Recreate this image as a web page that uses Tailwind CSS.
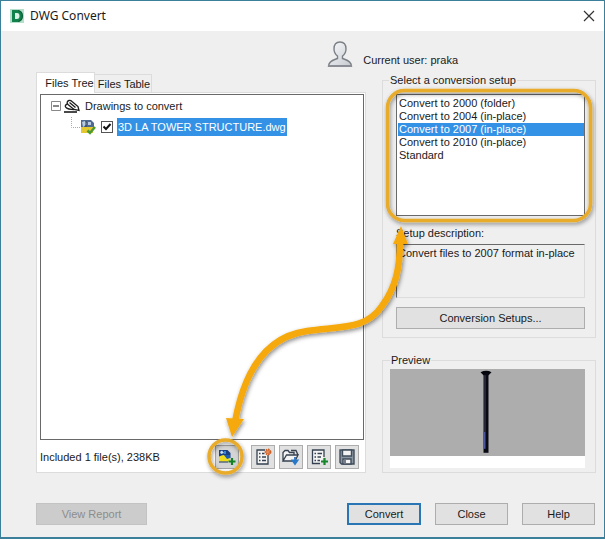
<!DOCTYPE html>
<html lang="en">
<head>
  <meta charset="UTF-8" />
  <meta name="viewport" content="width=device-width, initial-scale=1.0" />
  <title>DWG Convert</title>
  <script src="https://cdn.jsdelivr.net/npm/@tailwindcss/browser@4"></script>
</head>
<body class="font-['Liberation_Sans',Arial,sans-serif] text-[11px] leading-4 text-[#1a1a1a]">
  <div class="relative min-h-screen flex flex-col bg-[#efefef] border border-[#3c7f9b] border-b-2">
    <!-- Title bar -->
    <header class="h-[30px] flex items-center gap-1 bg-white pl-2 pr-2">
      <svg class="w-4 h-4" viewBox="0 0 16 16">
        <path d="M1 1h14v14H1z" fill="#b5dfca" />
        <path d="M4.500 3.500h3.500q4 0 4 4.500t-4 4.500H4.500z" fill="#d9f1e4" stroke="#12804b" stroke-width="3" />
        <path d="M9 2.500q4.500 1 4.500 5.500T9 13.500" fill="none" stroke="#0d6239" stroke-width="1.200" />
      </svg>
      <h1 class="grow font-['Noto_Sans','Open_Sans',sans-serif] text-xs pl-px">DWG Convert</h1>
      <button aria-label="Close window" class="w-4 h-4">
        <svg class="w-4 h-4" viewBox="0 0 16 16" fill="none" stroke="#333" stroke-width="1.200"><path d="M4 3l10 10M14 3L4 13" /></svg>
      </button>
    </header>

    <main class="grow flex flex-col pl-[35px] pr-2">
      <!-- Current user -->
      <div class="h-[41px] flex items-end justify-end gap-[10px] pr-[138px] pb-1">
        <svg class="w-[26px] h-7" viewBox="0 0 26 28">
          <defs>
            <linearGradient id="bust" x1="0" y1="0" x2="1" y2="1"><stop offset="0" stop-color="#fafbfc" /><stop offset="1" stop-color="#c6cad0" /></linearGradient>
          </defs>
          <path d="M13 2c-4 0-6 3-6 7 0 3 1.500 5.500 3.500 7v2.500C7 20 2 20.500 1.500 26h23C24 20.500 19 20 15.500 18.500V16C17.500 14.500 19 12 19 9c0-4-2-7-6-7z" fill="url(#bust)" stroke="#7b8087" stroke-width="1.400" />
          <path d="M1 26h24" stroke="#8a8e94" stroke-width="2" />
        </svg>
        <span>Current user: praka</span>
      </div>

      <div class="grow flex gap-4">
        <!-- Files -->
        <section class="grow flex flex-col">
          <div role="tablist" class="flex items-end h-5">
            <button role="tab" aria-selected="true" class="relative w-[59px] h-[21px] -mb-px pl-2 bg-white border border-b-0 border-[#dcdcdc]">Files Tree</button>
            <button role="tab" class="w-[57px] h-[18px] pl-0.5 bg-[#efefef] border border-l-0 border-b-0 border-[#dcdcdc]">Files Table</button>
          </div>
          <div class="grow flex flex-col bg-white border border-[#dcdcdc] pl-[3px] pr-px pt-px">
            <ul class="grow border border-[#696969] pl-[10px]">
              <li>
                <div class="flex items-center h-[22px]">
                  <svg class="w-[10px] h-[10px]" viewBox="0 0 10 10" fill="none"><path d="M.5.5h9v9h-9z" stroke="#888" /><path d="M2 5h6" stroke="#111" /></svg>
                  <svg class="w-[18px] h-4 ml-[2px]" viewBox="0 0 18 16" fill="none" stroke="#1c1c1c" stroke-width="1.300">
                    <path d="M6 2.500C4 3 3.500 5 5 6.500l6 5 5 1-1-4-6-5C8 2.500 7 2.300 6 2.500z" fill="#fff" />
                    <path d="M6.500 4.500l6 5M4.500 6C2.500 6.500 1.500 8 3 9.500c2 2 5 2 8 2" />
                    <path d="M1 14h13" stroke-width="1.600" />
                  </svg>
                  <span class="pl-1">Drawings to convert</span>
                </div>
                <ul>
                  <li class="flex items-center h-5 pl-5">
                    <svg class="w-[9px] h-5" viewBox="0 0 9 20" fill="none" stroke="#aaa" stroke-dasharray="1 1"><path d="M.5 0v10.500H9" /></svg>
                    <svg class="w-4 h-4" viewBox="0 0 16 16">
                      <path d="M1 1h10l3 3v5H1z" fill="#4e6a90" />
                      <path d="M2 3l3-1 2 3-4 3zM8 3h3v3H8z" fill="#b8cbe0" />
                      <path d="M1 8h12v6H1z" fill="#e3c92f" />
                      <path d="M6 2v6" stroke="#2f4059" fill="none" />
                      <path d="M7.500 11.500l2.500 2.500 5-6" fill="none" stroke="#4b9a35" stroke-width="2.500" />
                    </svg>
                    <input id="drawing" type="checkbox" checked class="peer appearance-none w-3 h-3 ml-[5px] border border-[#555] bg-white" />
                    <svg class="w-3 h-3 -ml-3 pointer-events-none" viewBox="0 0 12 12" fill="none" stroke="#111" stroke-width="2"><path d="M2.500 5.500L5 8l4.500-5" /></svg>
                    <label for="drawing" class="ml-1 px-px h-[18px] leading-[18px] bg-[#3392e6] text-white">3D LA TOWER STRUCTURE.dwg</label>
                  </li>
                </ul>
              </li>
            </ul>
            <div class="flex items-center h-8 pt-px pr-[5px]">
              <span class="grow">Included 1 file(s), 238KB</span>
              <div class="flex gap-1">
                <button aria-label="Add drawing" class="w-6 h-6 mr-2 flex items-center justify-center bg-[#d4d4d4] border border-[#a5a5a5]">
                  <svg class="w-5 h-5" viewBox="0 0 20 20">
                    <path d="M2 3h8.500l3 3v5H2z" fill="#173f82" />
                    <path d="M3 5l2-1.500L7 6 4 7z" fill="#c9def5" />
                    <path d="M7 4h2v3H7z" fill="#3c82d6" />
                    <path d="M2 9.500l4-1.500 7 1v5.500H2z" fill="#f0dc1a" />
                    <path d="M7 8h6v3l-3 1z" fill="#1c5cb4" />
                    <path d="M2 15h9" stroke="#16335f" />
                    <path d="M15 11v7M11.500 14.500h7" stroke="#128126" stroke-width="2.200" />
                  </svg>
                </button>
                <button aria-label="New list" class="w-6 h-6 flex items-center justify-center bg-[#e1e1e1] border border-[#adadad]">
                  <svg class="w-5 h-5" viewBox="0 0 20 20" fill="none" stroke="#354150" stroke-width="1.300">
                    <path d="M12 3H4v14h11V8" fill="#f4f4f4" /><path d="M6 6.500h1.500m1.500 0h2.500M6 10h1.500m1.500 0h4M6 13.500h1.500m1.500 0h4" />
                    <circle cx="15" cy="5" r="2.500" fill="#e08b5a" stroke="#cf6128" stroke-dasharray="1.500 .8" stroke-width="1.800" />
                  </svg>
                </button>
                <button aria-label="Open list" class="w-6 h-6 flex items-center justify-center bg-[#e1e1e1] border border-[#adadad]">
                  <svg class="w-5 h-5" viewBox="0 0 20 20" fill="#f4f4f4" stroke="#354150" stroke-width="1.300">
                    <path d="M2 14V5.500L4 3.500h3l1.500 2H13V8M2 14l3.500-6H17l-3 6z" /><path d="M10 3.500h5L17 8" fill="none" />
                    <path d="M14 10v4M11.500 13.500h5L14 17z" fill="#2879c8" stroke="#2879c8" stroke-width="1.800" />
                  </svg>
                </button>
                <button aria-label="Append list" class="w-6 h-6 flex items-center justify-center bg-[#e1e1e1] border border-[#adadad]">
                  <svg class="w-5 h-5" viewBox="0 0 20 20" fill="none" stroke="#354150" stroke-width="1.300">
                    <path d="M11 16.500H3.500V3H15v7" fill="#f4f4f4" /><path d="M5.500 6.500H7m1.500 0H13M5.500 10H7m1.500 0H12M5.500 13.500H7m1.500 0H11" />
                    <path d="M15.500 11v7M12 14.500h7" stroke="#16862a" stroke-width="2.200" />
                  </svg>
                </button>
                <button aria-label="Save list" class="w-6 h-6 flex items-center justify-center bg-[#e1e1e1] border border-[#adadad]">
                  <svg class="w-5 h-5" viewBox="0 0 20 20" stroke="#3f4c5b" stroke-width="1.400">
                    <path d="M3 3h14v14H4.500L3 15.500z" fill="#8b95a1" /><path d="M5.500 3h9v6h-9z" fill="#f2f2f2" /><path d="M6 12h8v5H6z" fill="#f7f7f7" />
                    <path d="M8 13v3" />
                  </svg>
                </button>
              </div>
            </div>
          </div>
        </section>

        <!-- Setup and preview -->
        <section class="w-[214px] shrink-0 flex flex-col gap-[14px]">
          <fieldset class="h-[266px] border border-[#dcdcdc] pl-[13px] pr-[10px] pt-[6px] flex flex-col">
            <legend class="-ml-[7px] px-px">Select a conversion setup</legend>
            <select size="9" aria-label="Conversion setup" class="block w-full h-[122px] appearance-none overflow-hidden bg-white border border-[#696969] pl-px pt-[2px] outline-none">
              <option class="h-[13px] min-h-0 p-0 pl-px leading-[13px]">Convert to 2000 (folder)</option>
              <option class="h-[13px] min-h-0 p-0 pl-px leading-[13px]">Convert to 2004 (in-place)</option>
              <option selected class="h-[13px] min-h-0 p-0 pl-px leading-[13px] bg-[#3392e6] text-white">Convert to 2007 (in-place)</option>
              <option class="h-[13px] min-h-0 p-0 pl-px leading-[13px]">Convert to 2010 (in-place)</option>
              <option class="h-[13px] min-h-0 p-0 pl-px leading-[13px]">Standard</option>
            </select>
            <label for="description" class="block pt-[9px]">Setup description:</label>
            <textarea id="description" readonly class="block w-full h-[54px] mt-[3px] resize-none bg-[#efefef] border border-[#696969] border-r-[#dcdcdc] border-b-[#dcdcdc] pl-px leading-4 outline-none">Convert files to 2007 format in-place</textarea>
            <button class="block w-full h-[22px] mt-[9px] bg-[#e1e1e1] border border-[#adadad]">Conversion Setups...</button>
          </fieldset>
          <fieldset class="border border-[#dcdcdc] pl-[7px] pr-[10px] pb-1">
            <legend class="px-px">Preview</legend>
            <div class="bg-white pb-3 mt-px">
              <svg class="block w-full h-[87px] bg-[#adadad]" viewBox="0 0 196 87">
                <path d="M91 3q6-3 11 0l-3 3h-5z" fill="#05050d" />
                <path d="M94 4h5v80h-5z" fill="#090914" />
                <path d="M95.500 6v57" stroke="#6d708c" stroke-width=".6" />
                <path d="M95 63v17" stroke="#4b55a2" stroke-width="2" />
              </svg>
            </div>
          </fieldset>
        </section>
      </div>

      <!-- Actions -->
      <footer class="flex items-center gap-[14px] pt-[30px] pb-[12px] pr-px">
        <button disabled class="w-[111px] h-[22px] mr-auto bg-[#cccccc] border border-[#c3c3c3] text-[#8c8c8c]">View Report</button>
        <button class="w-[74px] h-[22px] bg-[#e1e1e1] border-2 border-[#2a76b5]">Convert</button>
        <button class="w-[73px] h-[22px] bg-[#e1e1e1] border border-[#adadad]">Close</button>
        <button class="w-[73px] h-[22px] bg-[#e1e1e1] border border-[#adadad]">Help</button>
      </footer>
    </main>

    <!-- Callout from the add button to the setup list -->
    <svg class="absolute -top-px -right-px w-[605px] h-[539px] pointer-events-none" viewBox="0 0 605 539" fill="none">
      <defs>
        <filter id="shade" x="-20%" y="-20%" width="140%" height="140%"><feDropShadow dx="1" dy="2" stdDeviation="2" flood-color="#000" flood-opacity=".45" /></filter>
      </defs>
      <g filter="url(#shade)" stroke="#e8ab2b" stroke-width="3.500">
        <rect x="387.500" y="90.500" width="203" height="130" rx="17" />
        <circle cx="225.500" cy="456.500" r="16.500" />
      </g>
      <g filter="url(#shade)">
        <path d="M235 422C243 378 262 337 307 331C345 326 366 329 382 306C396 287 400 268 400 240" stroke="#f5a911" stroke-width="6.500" />
        <path d="M401 226l7 18h-15zM232 437l-6-19 18 1z" fill="#f5a911" />
      </g>
    </svg>
  </div>
</body>
</html>
